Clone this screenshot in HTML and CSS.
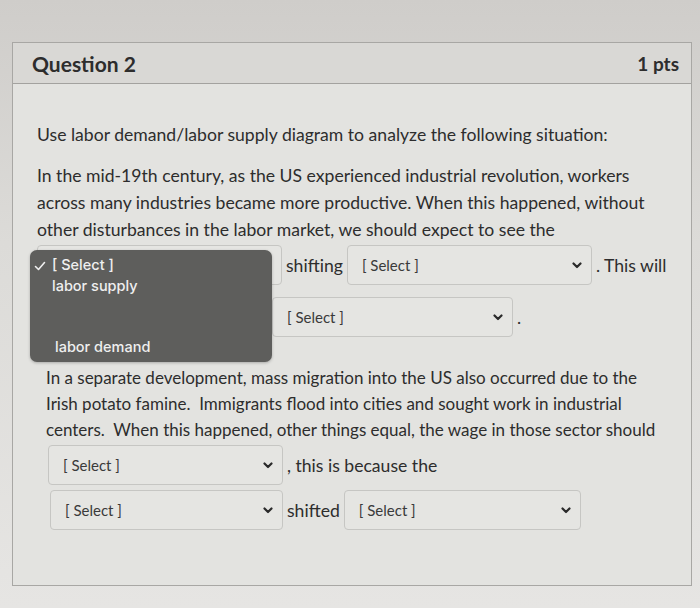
FILE: index.html
```html
<!DOCTYPE html>
<html>
<head>
    <meta charset="utf-8" />
    <title>Question 2</title>
    <link rel="stylesheet" href="styles.css">
</head>
<body>
    <div class="page">
        <div class="question">
            <div class="question-header">
                <span class="question-name">Question 2</span>
                <span class="question-pts">1 pts</span>
            </div>
            <div class="question-body">
                <p class="intro">Use labor demand/labor supply diagram to analyze the following situation:</p>
                <p class="text">In the mid-19th century, as the US experienced industrial revolution, workers<br>across many industries became more productive. When this happened, without<br>other disturbances in the labor market, we should expect to see the</p>

                <div class="answer-row">
                    <div class="select w245 covered"><span>[ Select ]</span><svg class="chev" width="10" height="7" viewBox="0 0 10 7"><polyline points="1.5,1.5 5,5 8.5,1.5" /></svg></div>
                    <span>shifting</span>
                    <div class="select w245"><span>[ Select ]</span><svg class="chev" width="10" height="7" viewBox="0 0 10 7"><polyline points="1.5,1.5 5,5 8.5,1.5" /></svg></div>
                    <span>. This will</span>
                </div>
                <div class="answer-row">
                    <div class="select w231 covered"><span>[ Select ]</span><svg class="chev" width="10" height="7" viewBox="0 0 10 7"><polyline points="1.5,1.5 5,5 8.5,1.5" /></svg></div>
                    <div class="select w241"><span>[ Select ]</span><svg class="chev" width="10" height="7" viewBox="0 0 10 7"><polyline points="1.5,1.5 5,5 8.5,1.5" /></svg></div>
                    <span>.</span>
                </div>

                <p class="text second">In a separate development, mass migration into the US also occurred due to the<br>Irish potato famine.&nbsp; Immigrants flood into cities and sought work in industrial<br>centers.&nbsp; When this happened, other things equal, the wage in those sector should</p>

                <div class="answer-row tight">
                    <div class="select w235"><span>[ Select ]</span><svg class="chev" width="10" height="7" viewBox="0 0 10 7"><polyline points="1.5,1.5 5,5 8.5,1.5" /></svg></div>
                    <span>, this is because the</span>
                </div>
                <div class="answer-row">
                    <div class="select w233"><span>[ Select ]</span><svg class="chev" width="10" height="7" viewBox="0 0 10 7"><polyline points="1.5,1.5 5,5 8.5,1.5" /></svg></div>
                    <span>shifted</span>
                    <div class="select w237"><span>[ Select ]</span><svg class="chev" width="10" height="7" viewBox="0 0 10 7"><polyline points="1.5,1.5 5,5 8.5,1.5" /></svg></div>
                </div>

                <!-- open dropdown of the first select -->
                <ul class="dropdown">
                    <li class="picked"><svg class="tick" width="12" height="10" viewBox="0 0 12 10"><polyline points="1.5,5.5 4.5,8.5 10.5,1.5" /></svg>[ Select ]</li>
                    <li>labor supply</li>
                    <li></li>
                    <li></li>
                    <li>labor demand</li>
                </ul>
            </div>
        </div>
    </div>
</body>
</html>
```

FILE: styles.css
```css
body {
    margin: 0;
    background: linear-gradient(#cfcdca, #dcdbd8 40%, #e6e5e3);
    font-family: Lato, "Open Sans", sans-serif;
    color: #2d2d2d;
}

.page {
    height: 608px;
    padding: 42px 10px 0 12px;
    box-sizing: border-box;
}

.question {
    width: 678px;
    border: 1px solid #a8a7a4;
    background: #e3e3e0;
}

.question-header {
    display: flex;
    justify-content: space-between;
    align-items: center;
    height: 40px;
    padding: 0 12px 0 19px;
    background: #d9d8d5;
    border-bottom: 1px solid #a3a29f;
    font-weight: 700;
}

.question-name {
    font-size: 21px;
}

.question-pts {
    font-size: 19px;
}

.question-body {
    position: relative; /* anchor for the open dropdown */
    padding: 37px 10px 43px 24px;
    font-size: 17.6px;
    line-height: 27px;
}

.intro {
    margin: 0 0 14px;
}

.text {
    margin: 0;
    white-space: nowrap;
}

.text.second {
    margin: 28px 0 0;
    padding-left: 9px;
    font-size: 17px;
    line-height: 26px;
}

.answer-row {
    display: flex;
    align-items: center;
    gap: 4px;
    margin: 2px 0 12px;
}

.answer-row.tight {
    margin: 2px 0 5px 11px;
}

.answer-row.tight + .answer-row {
    margin-left: 13px;
}

.select {
    display: flex;
    align-items: center;
    justify-content: space-between;
    height: 40px;
    padding: 0 9px 0 14px;
    box-sizing: border-box;
    border: 1px solid #c6c6c3;
    border-radius: 4px;
    background: #e5e5e2;
    font-size: 15px;
    color: #3a3a3a;
}

/* label sits under the open dropdown, nothing of it shows */
.select.covered span {
    visibility: hidden;
}

.w231 { width: 231px; }
.w233 { width: 233px; }
.w235 { width: 235px; }
.w237 { width: 237px; }
.w241 { width: 241px; }
.w245 { width: 245px; }

.chev polyline {
    fill: none;
    stroke: #2a2a2a;
    stroke-width: 2.2;
    stroke-linecap: round;
    stroke-linejoin: round;
}

.dropdown {
    position: absolute;
    left: 17px;
    top: 166px;
    width: 242px;
    height: 112px;
    margin: 0;
    padding: 5px 0 0;
    box-sizing: border-box;
    list-style: none;
    background: #5e5e5c;
    border-radius: 7px;
    box-shadow: 0 1px 3px rgba(0,0,0,.25);
    font-family: Inter, "Noto Sans", sans-serif;
    font-size: 14.5px;
    font-weight: 500;
    line-height: 20.5px;
    color: #efefef;
}

    .dropdown li {
        height: 20.5px;
        padding-left: 22px;
    }

    .dropdown li:last-child {
        padding-left: 25px;
    }

    .dropdown .picked {
        padding-left: 4px;
    }

    .dropdown .tick {
        margin-right: 6px;
        vertical-align: -1px;
    }

    .dropdown .tick polyline {
        fill: none;
        stroke: #efefef;
        stroke-width: 1.6;
        stroke-linecap: round;
        stroke-linejoin: round;
    }
```
